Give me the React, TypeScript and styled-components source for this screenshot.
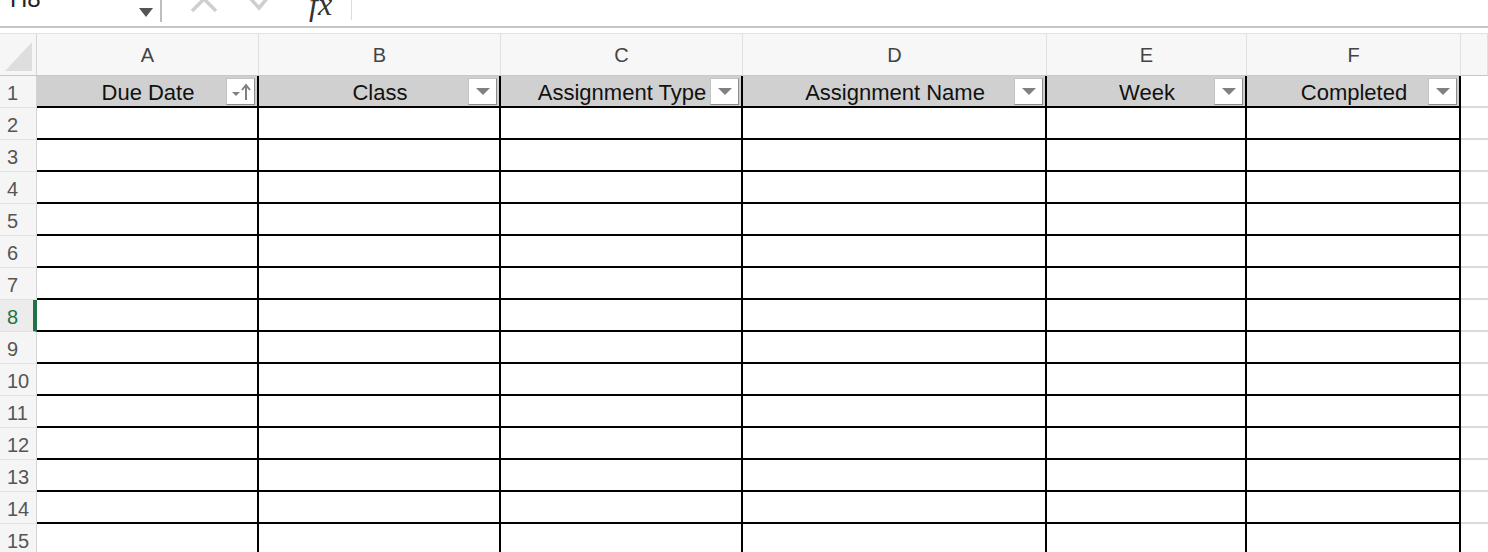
import React from "react";
import styled, { createGlobalStyle, css } from "styled-components";

const GlobalStyle = createGlobalStyle`
  html, body {
    margin: 0;
    padding: 0;
    background: #ffffff;
  }
  body {
    font-family: "Liberation Sans", Arial, sans-serif;
  }
`;

type Column = {
  letter: string;
  title: string;
  width: number;
  sorted?: boolean;
};

const columns: Column[] = [
  { letter: "A", title: "Due Date", width: 222, sorted: true },
  { letter: "B", title: "Class", width: 242 },
  { letter: "C", title: "Assignment Type", width: 242 },
  { letter: "D", title: "Assignment Name", width: 304 },
  { letter: "E", title: "Week", width: 200 },
  { letter: "F", title: "Completed", width: 214 },
];

const dataRows = Array.from({ length: 14 }, (_, i) => i + 2);
const activeRow = 8;

const Sheet = () => {
  return (
    <>
      <GlobalStyle />
      <Page>
        <FormulaBar>
          <NameBox>
            <NameText>H8</NameText>
            <NameCaret />
          </NameBox>
          <BarDivider />
          <BarButtons>
            <BarIcon width="30" height="30" viewBox="0 0 30 30">
              <path d="M3 3 L27 27 M27 3 L3 27" />
            </BarIcon>
            <BarIcon width="30" height="30" viewBox="0 0 30 30">
              <path d="M2 13 L12 24 L28 5" />
            </BarIcon>
            <Fx>fx</Fx>
          </BarButtons>
          <FormulaInput />
        </FormulaBar>

        <Grid>
          <Corner>
            <CornerTriangle />
          </Corner>
          {columns.map((c) => (
            <ColLetter key={c.letter}>{c.letter}</ColLetter>
          ))}
          <ColLetter />

          <RowNumber>1</RowNumber>
          {columns.map((c) => (
            <HeaderCell key={c.letter}>
              {c.title}
              <FilterButton>
                {c.sorted ? (
                  <svg width="26" height="24" viewBox="0 0 26 24">
                    <path d="M4 12 L12 12 L8 16 Z" fill="#808080" />
                    <path
                      d="M18 20 L18 6 M14 10 L18 5 L22 10"
                      stroke="#808080"
                      strokeWidth="2"
                      fill="none"
                    />
                  </svg>
                ) : (
                  <svg width="16" height="9" viewBox="0 0 16 9">
                    <path d="M1 1 L15 1 L8 8 Z" fill="#808080" />
                  </svg>
                )}
              </FilterButton>
            </HeaderCell>
          ))}
          <OuterCell />

          {dataRows.map((r) => (
            <React.Fragment key={r}>
              <RowNumber $active={r === activeRow}>{r}</RowNumber>
              {columns.map((c) => (
                <DataCell key={c.letter} />
              ))}
              <OuterCell />
            </React.Fragment>
          ))}
        </Grid>
      </Page>
    </>
  );
};

const Page = styled.div`
  width: 1488px;
  height: 552px;
  overflow: hidden;
  background: #ffffff;
`;

const FormulaBar = styled.div`
  display: flex;
  align-items: stretch;
  height: 26px;
  border-bottom: 2px solid #c6c6c6;
  margin-bottom: 5px;
  overflow: hidden;
`;

const NameBox = styled.div`
  position: relative;
  width: 160px;
  display: flex;
  align-items: flex-start;
  justify-content: space-between;
  padding: 0 7px 0 10px;
  box-sizing: border-box;
`;

const NameText = styled.span`
  font-family: "Liberation Sans", Arial, sans-serif;
  font-size: 24px;
  line-height: 24px;
  margin-top: -13px;
  color: #222;
`;

const NameCaret = styled.span`
  width: 0;
  height: 0;
  margin-top: 8px;
  border-left: 7px solid transparent;
  border-right: 7px solid transparent;
  border-top: 9px solid #555;
`;

const BarDivider = styled.div`
  width: 2px;
  height: 22px;
  background: #bdbdbd;
`;

const BarButtons = styled.div`
  display: flex;
  align-items: flex-start;
  gap: 28px;
  padding-left: 27px;
  width: 190px;
  box-sizing: border-box;
  border-right: 1px solid #dcdcdc;
  height: 20px;
`;

const BarIcon = styled.svg`
  margin-top: -16px;
  stroke: #cfcfcf;
  stroke-width: 3.5;
  fill: none;
`;

const Fx = styled.span`
  font-family: "Liberation Serif", "Times New Roman", serif;
  font-style: italic;
  font-size: 32px;
  line-height: 32px;
  margin-top: -12px;
  margin-left: 4px;
  color: #333;
`;

const FormulaInput = styled.div`
  flex: 1;
`;

const Grid = styled.div`
  display: grid;
  grid-template-columns: 37px ${columns.map((c) => `${c.width}px`).join(" ")} 1fr;
  grid-template-rows: 42px repeat(15, 32px);
  border-top: 1px solid #e3e3e3;
`;

const Corner = styled.div`
  position: relative;
  background: #f6f6f6;
  border-right: 1px solid #d4d4d4;
  border-bottom: 1px solid #c8c8c8;
`;

const CornerTriangle = styled.div`
  position: absolute;
  right: 4px;
  bottom: 4px;
  width: 0;
  height: 0;
  border-left: 27px solid transparent;
  border-bottom: 29px solid #dedede;
`;

const ColLetter = styled.div`
  display: flex;
  align-items: center;
  justify-content: center;
  padding-top: 2px;
  background: #f7f7f7;
  border-right: 1px solid #e0e0e0;
  border-bottom: 1px solid #c8c8c8;
  font-size: 20px;
  color: #444;
`;

const RowNumber = styled.div<{ $active?: boolean }>`
  display: flex;
  align-items: center;
  padding: 3px 0 0 7px;
  box-sizing: border-box;
  background: #f5f5f5;
  border-right: 1px solid #d4d4d4;
  border-bottom: 1px solid #e2e2e2;
  font-size: 20px;
  color: #555;
  ${(p) =>
    p.$active &&
    css`
      background: #ececec;
      color: #217346;
      border-right: 4px solid #217346;
    `}
`;

const HeaderCell = styled.div`
  position: relative;
  display: flex;
  align-items: center;
  justify-content: center;
  padding: 3px 0 0 2px;
  background: #d0d0d0;
  border-right: 2px solid #000;
  border-bottom: 2px solid #000;
  font-size: 22px;
  color: #111;
  white-space: nowrap;
`;

const FilterButton = styled.div`
  position: absolute;
  right: 2px;
  top: 2px;
  width: 29px;
  height: 27px;
  display: flex;
  align-items: center;
  justify-content: center;
  box-sizing: border-box;
  background: #ffffff;
  border: 1px solid #c4c4c4;
  border-right-color: #8c8c8c;
  border-bottom-color: #8c8c8c;
`;

const DataCell = styled.div`
  background: #ffffff;
  border-right: 2px solid #000;
  border-bottom: 2px solid #000;
`;

const OuterCell = styled.div`
  background: #ffffff;
  border-bottom: 2px solid #dadada;
`;

export default Sheet;
